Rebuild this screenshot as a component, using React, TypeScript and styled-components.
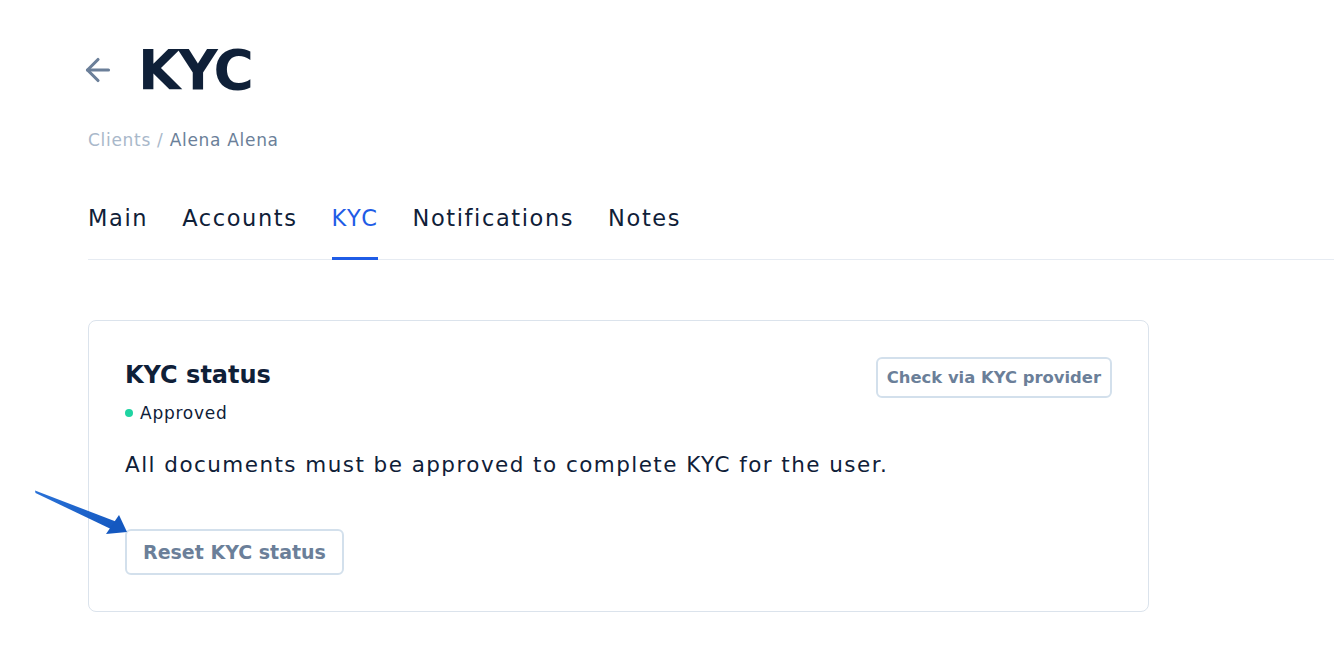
import React from 'react';
import styled, { createGlobalStyle } from 'styled-components';

const GlobalStyle = createGlobalStyle`
    body {
        margin: 0;
        background: #ffffff;
        font-family: 'DejaVu Sans', 'Liberation Sans', sans-serif;
        color: #0f2038;
    }
`;

const Page = styled.div`
    position: relative;
    width: 1334px;
    height: 652px;
    padding: 37px 0 0 88px;
    box-sizing: border-box;
    overflow: hidden;
`;

const TitleRow = styled.div`
    display: flex;
    align-items: center;
    gap: 22px;
    height: 66px;
`;

const BackButton = styled.button`
    display: flex;
    align-items: center;
    justify-content: center;
    margin-left: -8px;
    padding: 0;
    border: none;
    background: none;
    color: #6b7f99;
    cursor: pointer;
`;

const Title = styled.h1`
    margin: 0;
    font-size: 55px;
    line-height: 66px;
    font-weight: 700;
    letter-spacing: -2.5px;
    color: #0f2038;
`;

const Breadcrumbs = styled.div`
    margin-top: 26px;
    font-size: 17px;
    line-height: 22px;
    letter-spacing: 0.7px;
    color: #a9b8ca;
`;

const Crumb = styled.span<{ current?: boolean }>`
    color: ${(props) => (props.current ? '#6b7f99' : '#a9b8ca')};
`;

const Tabs = styled.nav`
    display: flex;
    gap: 34px;
    margin-top: 53px;
    border-bottom: 1px solid #e6ebf2;
`;

const Tab = styled.a<{ active?: boolean }>`
    padding-bottom: 25px;
    margin-bottom: -1px;
    font-size: 22.5px;
    line-height: 28px;
    letter-spacing: 1.6px;
    color: ${(props) => (props.active ? '#1f5ce6' : '#0f2038')};
    border-bottom: 3px solid ${(props) => (props.active ? '#1f5ce6' : 'transparent')};
    cursor: pointer;
`;

const Card = styled.section`
    width: 1061px;
    margin-top: 60px;
    padding: 38px 36px 36px 36px;
    box-sizing: border-box;
    border: 1px solid #dbe3ec;
    border-radius: 8px;
`;

const CardHeader = styled.div`
    display: flex;
    justify-content: space-between;
    align-items: flex-start;
`;

const CardTitle = styled.h2`
    margin: 0;
    font-size: 24px;
    line-height: 32px;
    font-weight: 700;
    color: #0f2038;
`;

const Status = styled.div`
    display: flex;
    align-items: center;
    gap: 7px;
    margin-top: 11px;
    font-size: 17px;
    line-height: 22px;
    letter-spacing: 0.75px;
    color: #0f2038;
`;

const Dot = styled.span<{ color: string }>`
    width: 8px;
    height: 8px;
    border-radius: 50%;
    background: ${(props) => props.color};
`;

const Description = styled.p`
    margin: 27px 0 0;
    font-size: 21.5px;
    line-height: 28px;
    letter-spacing: 1.45px;
    color: #0f2038;
`;

const OutlineButton = styled.button<{ size: 'sm' | 'md' }>`
    padding: ${(props) => (props.size === 'sm' ? '8px 9px' : '10px 16px')};
    margin-top: ${(props) => (props.size === 'sm' ? '-2px' : '0')};
    border: 2px solid #d3e0ec;
    border-radius: 6px;
    background: #ffffff;
    font-family: inherit;
    font-size: ${(props) => (props.size === 'sm' ? '16.4px' : '19px')};
    line-height: ${(props) => (props.size === 'sm' ? '21px' : '22px')};
    font-weight: 700;
    color: #6b7f99;
    cursor: pointer;
`;

const ResetRow = styled.div`
    margin-top: 50px;
`;

const Pointer = styled.svg`
    position: absolute;
    left: 30px;
    top: 485px;
    pointer-events: none;
`;

const ArrowLeft = () => (
    <svg width="36" height="36" viewBox="0 0 24 24" fill="none" stroke="currentColor" strokeWidth="2.1" strokeLinecap="round" strokeLinejoin="round">
        <path d="M19 12H5" />
        <path d="M12 19l-7-7 7-7" />
    </svg>
);

const tabs = ['Main', 'Accounts', 'KYC', 'Notifications', 'Notes'];

export default function App() {
    return (
        <Page>
            <GlobalStyle />
            <TitleRow>
                <BackButton aria-label="Back">
                    <ArrowLeft />
                </BackButton>
                <Title>KYC</Title>
            </TitleRow>
            <Breadcrumbs>
                <Crumb>Clients</Crumb> / <Crumb current>Alena Alena</Crumb>
            </Breadcrumbs>
            <Tabs>
                {tabs.map((t) => (
                    <Tab key={t} active={t === 'KYC'}>
                        {t}
                    </Tab>
                ))}
            </Tabs>
            <Card>
                <CardHeader>
                    <div>
                        <CardTitle>KYC status</CardTitle>
                        <Status>
                            <Dot color="#1fd4a2" />
                            Approved
                        </Status>
                    </div>
                    <OutlineButton size="sm">Check via KYC provider</OutlineButton>
                </CardHeader>
                <Description>All documents must be approved to complete KYC for the user.</Description>
                <ResetRow>
                    <OutlineButton size="md">Reset KYC status</OutlineButton>
                </ResetRow>
            </Card>
            {/* callout pointing at the reset button: tapered shaft plus head */}
            <Pointer width="100" height="56" viewBox="0 0 100 56">
                <defs>
                    <linearGradient id="pointerFill" x1="0" y1="0" x2="1" y2="1">
                        <stop offset="0" stopColor="#2a72d8" />
                        <stop offset="1" stopColor="#1458c0" />
                    </linearGradient>
                </defs>
                <path d="M5 5.5 L5.5 8 L83 45 L87 37 Z" fill="url(#pointerFill)" />
                <path d="M97 47 L76 49 L89 30 Z" fill="#1458c0" />
            </Pointer>
        </Page>
    );
}
